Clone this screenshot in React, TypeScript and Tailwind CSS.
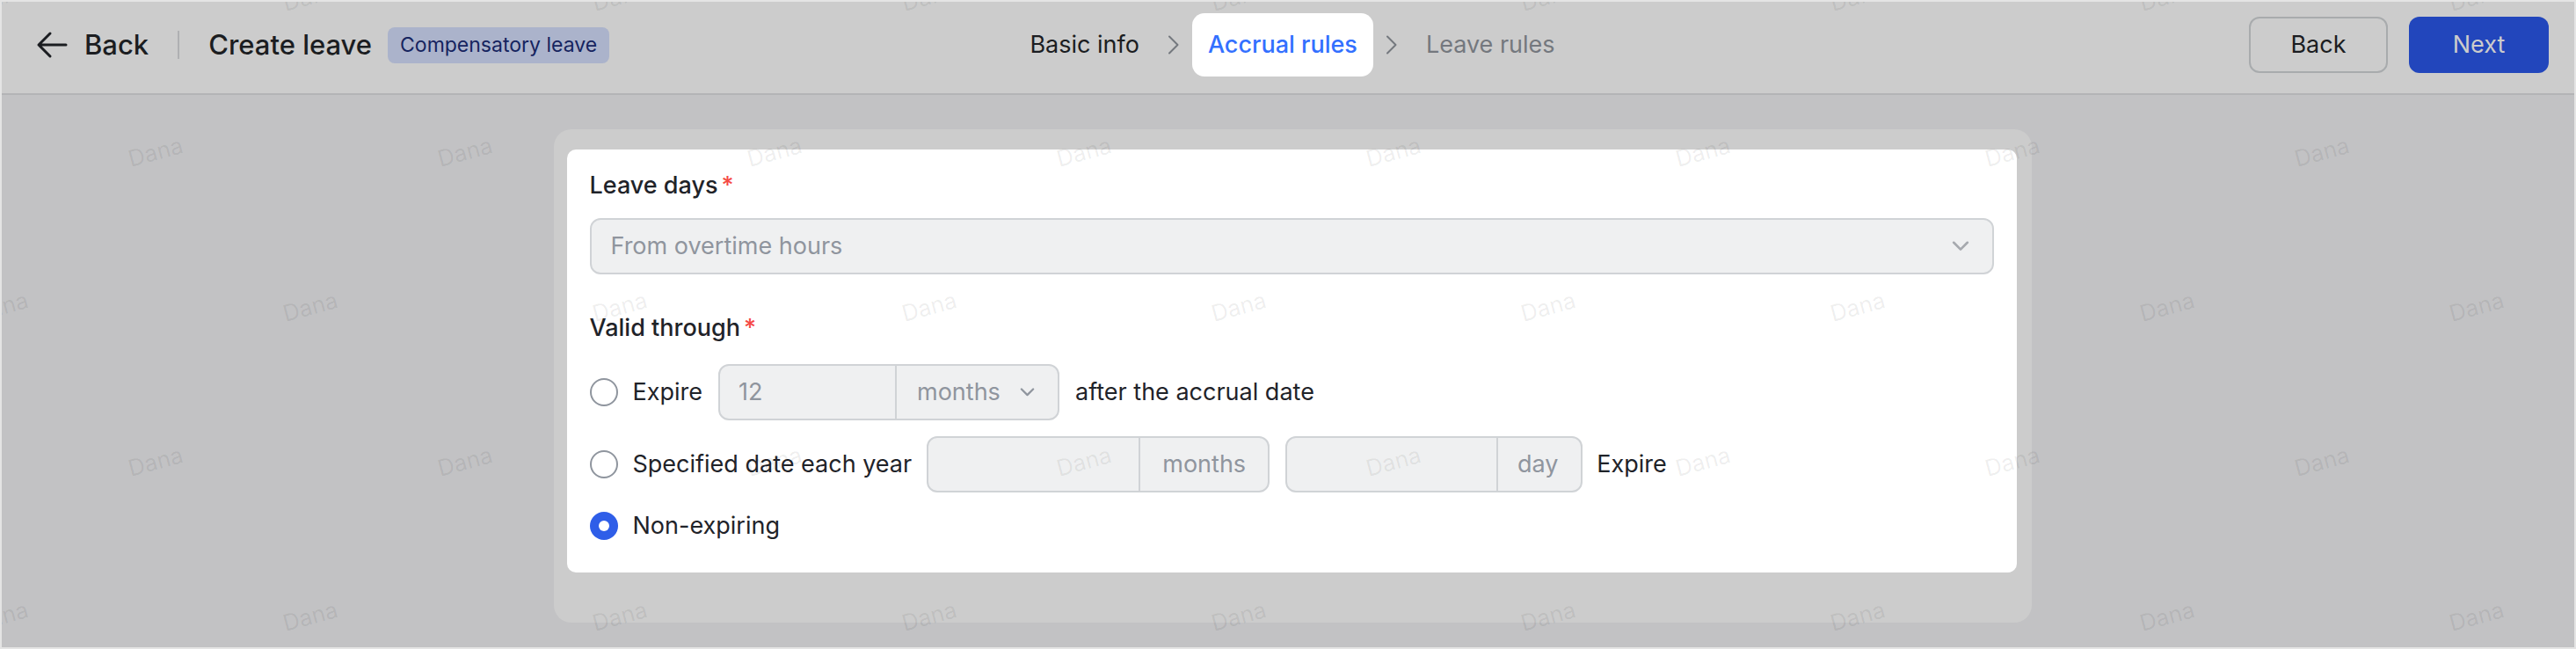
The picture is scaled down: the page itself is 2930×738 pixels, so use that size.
import React from 'react';

const FONT = "font-['Inter','Liberation_Sans',sans-serif]";

// watermark grid: rows alternate by half a column
const MARK_ROWS = [-6, 171, 347, 523, 699];

function Watermarks() {
  const marks: { x: number; y: number }[] = [];
  MARK_ROWS.forEach((y, r) => {
    const start = r % 2 === 0 ? -1 : 175;
    for (let x = start; x < 3000; x += 352) marks.push({ x, y });
  });
  return (
    <div className="pointer-events-none absolute inset-0 z-20 overflow-hidden">
      {marks.map((m, i) => (
        <span
          key={i}
          className="absolute -translate-x-1/2 -translate-y-1/2 -rotate-[15deg] text-[26px] leading-none text-black/[0.07]"
          style={{ left: m.x, top: m.y }}
        >
          Dana
        </span>
      ))}
    </div>
  );
}

function StepChevron() {
  return (
    <svg width="14" height="22" viewBox="0 0 14 22" fill="none" className="mx-[14px] shrink-0">
      <path d="M2 1.5 L11.5 11 L2 20.5" stroke="#74787e" strokeWidth="2" strokeLinecap="round" strokeLinejoin="round" />
    </svg>
  );
}

function DownChevron({ color = '#a6a9ae', w = 16 }: { color?: string; w?: number }) {
  return (
    <svg width={w} height={w * 0.6} viewBox="0 0 16 10" fill="none" className="shrink-0">
      <path d="M1.5 1.5 L8 8 L14.5 1.5" stroke={color} strokeWidth="2.2" strokeLinecap="round" strokeLinejoin="round" />
    </svg>
  );
}

function Radio({ checked = false }: { checked?: boolean }) {
  if (checked) {
    return (
      <span className="flex h-[32px] w-[32px] shrink-0 items-center justify-center rounded-full bg-[#2f5ee8]">
        <span className="h-[12px] w-[12px] rounded-full bg-white" />
      </span>
    );
  }
  return <span className="h-[32px] w-[32px] shrink-0 rounded-full border-2 border-[#8f959e] bg-white" />;
}

function Label({ children }: { children: React.ReactNode }) {
  return (
    <div className="flex h-[40px] items-center text-[27px] font-medium text-[#1f2329]">
      {children}
      <span className="ml-[4px] text-[#f54a45]">*</span>
    </div>
  );
}

export default function App() {
  return (
    <div className={`${FONT} relative flex h-[738px] w-[2930px] flex-col overflow-hidden border-2 border-[#e4e4e4] bg-[#c2c2c4]`}>
      {/* Top bar */}
      <header className="grid h-[106px] shrink-0 grid-cols-[1fr_auto_1fr] items-center border-b-2 border-[#b3b4b6] bg-[#cccccc] pb-[6px] pl-[39px] pr-[29px]">
        <div className="flex items-center">
          <svg width="36" height="32" viewBox="0 0 36 32" fill="none" className="shrink-0">
            <path d="M34 16 H3 M16 3 L3 16 L16 29" stroke="#1b1d21" strokeWidth="3" strokeLinecap="round" strokeLinejoin="round" />
          </svg>
          <span className="ml-[19px] text-[31px] font-medium text-[#1b1d21]">Back</span>
          <span className="mx-[33px] h-[32px] w-[2px] bg-[#afb0b2]" />
          <span className="text-[31px] font-medium text-[#1b1d21]">Create leave</span>
          <span className="ml-[18px] flex h-[41px] items-center rounded-[8px] bg-[#abb3cb] px-[14px] text-[23px] text-[#16245f]">
            Compensatory leave
          </span>
        </div>

        <div className="flex items-center text-[27px]">
          <span className="px-[18px] text-[#1b1d21]">Basic info</span>
          <StepChevron />
          <span className="flex h-[72px] items-center rounded-[14px] bg-white px-[18px] font-medium text-[#3370ff]">
            Accrual rules
          </span>
          <StepChevron />
          <span className="px-[18px] text-[#74787e]">Leave rules</span>
        </div>

        <div className="flex items-center justify-end gap-[24px] text-[27px]">
          <button className="flex h-[64px] w-[158px] items-center justify-center rounded-[12px] border-2 border-[#a8abad] text-[#1b1d21]">
            Back
          </button>
          <button className="flex h-[64px] w-[159px] items-center justify-center rounded-[12px] bg-[#2246bc] text-[#cccccc]">
            Next
          </button>
        </div>
      </header>

      {/* Body */}
      <main className="flex flex-1 justify-center pl-[10px] pt-[39px]">
        <div className="h-[561px] w-[1681px] rounded-[20px] bg-[#cccccc] pb-[57px] pl-[15px] pr-[17px] pt-[23px]">
          <div className="flex h-[481px] flex-col rounded-[10px] bg-white px-[26px] pb-[33px] pt-[21px] text-[27px] text-[#1f2329]">
            <Label>Leave days</Label>

            <div className="mt-[17px] flex h-[64px] items-center justify-between rounded-[12px] border-2 border-[#d0d3d6] bg-[#eff0f1] pl-[22px] pr-[26px]">
              <span className="text-[#8f959e]">From overtime hours</span>
              <DownChevron w={20} />
            </div>

            <div className="mt-[41px]">
              <Label>Valid through</Label>
            </div>

            {/* Expire after */}
            <div className="mt-[21px] flex h-[64px] items-center">
              <Radio />
              <span className="ml-[17px]">Expire</span>
              <div className="ml-[18px] flex h-[64px] items-stretch overflow-hidden rounded-[12px] border-2 border-[#d0d3d6] bg-[#eff0f1]">
                <span className="flex w-[199px] items-center pl-[21px] text-[#8f959e]">12</span>
                <span className="flex w-[185px] items-center border-l-2 border-[#d0d3d6] pl-[23px] text-[#8f959e]">
                  months
                  <span className="ml-[22px]">
                    <DownChevron color="#8f959e" w={17} />
                  </span>
                </span>
              </div>
              <span className="ml-[18px]">after the accrual date</span>
            </div>

            {/* Specified date */}
            <div className="mt-[18px] flex h-[64px] items-center">
              <Radio />
              <span className="ml-[17px]">Specified date each year</span>
              <div className="ml-[17px] flex h-[64px] items-stretch overflow-hidden rounded-[12px] border-2 border-[#d0d3d6] bg-[#eff0f1]">
                <span className="w-[239px]" />
                <span className="flex w-[147px] items-center justify-center border-l-2 border-[#d0d3d6] text-[#8f959e]">months</span>
              </div>
              <div className="ml-[18px] flex h-[64px] items-stretch overflow-hidden rounded-[12px] border-2 border-[#d0d3d6] bg-[#eff0f1]">
                <span className="w-[238px]" />
                <span className="flex w-[96px] items-center justify-center border-l-2 border-[#d0d3d6] pr-[4px] text-[#8f959e]">day</span>
              </div>
              <span className="ml-[16px]">Expire</span>
            </div>

            {/* Non-expiring */}
            <div className="mt-[18px] flex h-[40px] items-center">
              <Radio checked />
              <span className="ml-[17px]">Non-expiring</span>
            </div>
          </div>
        </div>
      </main>

      <Watermarks />
    </div>
  );
}
